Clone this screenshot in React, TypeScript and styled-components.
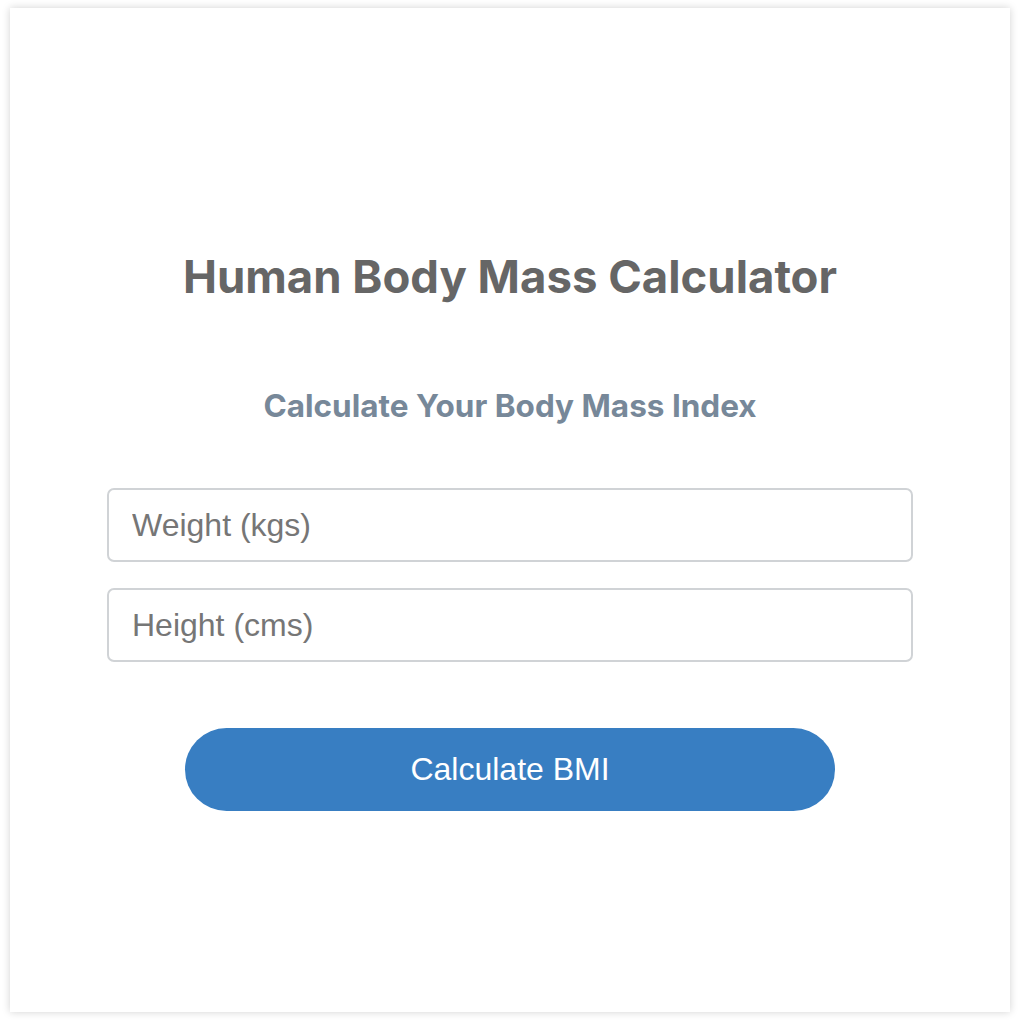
import styled, { createGlobalStyle } from "styled-components";

const Global = createGlobalStyle`
  body {
    margin: 0;
    background: #fff;
    font-family: Inter, "Liberation Sans", sans-serif;
  }
`;

const Page = styled.div`
  padding: 8px 8px 8px 10px;
`;

const Card = styled.div`
  width: 1000px;
  height: 1004px;
  box-sizing: border-box;
  background: #fff;
  box-shadow: 0 0 8px rgba(0, 0, 0, 0.18);
  display: flex;
  flex-direction: column;
  align-items: center;
  padding-top: 239px;
`;

const Title = styled.h1`
  margin: 0;
  font-family: Inter, sans-serif;
  font-weight: 700;
  font-size: 45.5px;
  line-height: 60px;
  color: #666;
`;

const Subtitle = styled.h2`
  margin: 79px 0 0;
  font-family: Inter, sans-serif;
  font-weight: 700;
  font-size: 31.5px;
  line-height: 40px;
  color: #778899;
`;

const Form = styled.form`
  margin-top: 62px;
  width: 806px;
  display: flex;
  flex-direction: column;
  align-items: center;
  gap: 26px;
`;

const Input = styled.input`
  width: 100%;
  height: 74px;
  box-sizing: border-box;
  border: 2px solid #d0d3d6;
  border-radius: 7px;
  padding: 0 23px;
  font-family: "Liberation Sans", Arial, sans-serif;
  font-size: 32px;
  color: #333;
  outline: none;
  &::placeholder {
    color: #767676;
  }
`;

const Button = styled.button`
  margin-top: 40px;
  width: 650px;
  height: 83px;
  border: none;
  border-radius: 42px;
  background: #387ec2;
  color: #fff;
  font-family: "Liberation Sans", Arial, sans-serif;
  font-size: 32px;
  cursor: pointer;
`;

export default function App() {
  return (
    <Page>
      <Global />
      <Card>
        <Title>Human Body Mass Calculator</Title>
        <Subtitle>Calculate Your Body Mass Index</Subtitle>
        <Form onSubmit={(e) => e.preventDefault()}>
          <Input type="text" placeholder="Weight (kgs)" />
          <Input type="text" placeholder="Height (cms)" />
          <Button type="submit">Calculate BMI</Button>
        </Form>
      </Card>
    </Page>
  );
}
